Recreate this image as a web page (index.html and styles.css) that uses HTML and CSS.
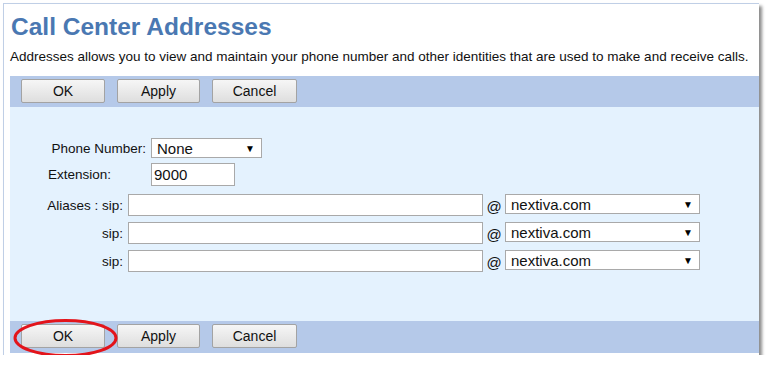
FILE: index.html
```html
<!DOCTYPE html>
<html>
<head>
<meta charset="utf-8">
<link rel="stylesheet" href="styles.css">
</head>
<body>
<div class="frame">
  <h1 class="title">Call Center Addresses</h1>
  <p class="desc">Addresses allows you to view and maintain your phone number and other identities that are used to make and receive calls.</p>
  <div class="bar">
    <button class="btn btn-ok">OK</button>
    <button class="btn btn-apply">Apply</button>
    <button class="btn btn-cancel">Cancel</button>
  </div>
  <div class="content">
    <div class="row row-phone">
      <span class="label label-phone">Phone Number:</span>
      <div class="select select-phone"><span class="sel-text">None</span><span class="arrow">▼</span></div>
    </div>
    <div class="row row-ext">
      <span class="label label-ext">Extension:</span>
      <div class="input input-ext">9000</div>
    </div>
    <div class="row row-alias">
      <span class="label label-alias">Aliases : sip:</span>
      <div class="input input-sip"></div>
      <span class="at">@</span>
      <div class="select select-domain"><span class="sel-text">nextiva.com</span><span class="arrow">▼</span></div>
    </div>
    <div class="row row-alias">
      <span class="label label-alias">sip:</span>
      <div class="input input-sip"></div>
      <span class="at">@</span>
      <div class="select select-domain"><span class="sel-text">nextiva.com</span><span class="arrow">▼</span></div>
    </div>
    <div class="row row-alias">
      <span class="label label-alias">sip:</span>
      <div class="input input-sip"></div>
      <span class="at">@</span>
      <div class="select select-domain"><span class="sel-text">nextiva.com</span><span class="arrow">▼</span></div>
    </div>
  </div>
  <div class="bar bar-bottom">
    <button class="btn btn-ok">OK</button>
    <button class="btn btn-apply">Apply</button>
    <button class="btn btn-cancel">Cancel</button>
    <svg class="highlight" width="105" height="40" viewBox="0 0 105 40"><ellipse cx="52.5" cy="20" rx="50.5" ry="17.5" fill="none" stroke="#e3141b" stroke-width="3"/></svg>
  </div>
</div>
</body>
</html>
```
FILE: styles.css
```css
html, body {
  margin: 0;
  padding: 0;
  background: #ffffff;
  font-family: "Liberation Sans", Arial, sans-serif;
  color: #111;
}
.frame {
  margin: 3px 0 0 3px;
  width: 749px;
  padding: 0 0 2px 6px;
  border-top: 1px solid #c0cfe6;
  border-left: 1px solid #c0cfe6;
  box-shadow: 3px 3px 3px rgba(0, 0, 0, 0.45);
  background: #fff;
}
.title {
  margin: 9px 0 0 1px;
  font-size: 24.5px;
  line-height: 28px;
  font-weight: bold;
  color: #4a78b2;
}
.desc {
  margin: 8px 0 0 0;
  font-size: 13.5px;
  line-height: 16px;
  white-space: nowrap;
  color: #111;
}
.bar {
  margin-top: 11px;
  height: 31px;
  background: #b5c9e9;
  display: flex;
  align-items: flex-start;
  gap: 12px;
  padding: 3px 0 0 11px;
  box-sizing: border-box;
  position: relative;
}
.bar-bottom {
  margin-top: 0;
  height: 32px;
}
.btn {
  height: 24px;
  width: 84px;
  padding: 0;
  border: 1px solid #a3a3a3;
  border-radius: 2px;
  background: linear-gradient(#f6f6f6, #dedede);
  font-family: "Liberation Sans", Arial, sans-serif;
  font-size: 14px;
  color: #111;
}
.btn-apply { width: 83px; }
.btn-cancel { width: 85px; }
.highlight {
  position: absolute;
  left: 3px;
  top: -3px;
}
.content {
  background: #e4f2fe;
  height: 214px;
  box-sizing: border-box;
  padding-top: 31px;
  font-size: 13.5px;
}
.row {
  display: flex;
  align-items: center;
}
.row-phone { height: 20px; }
.row-ext { height: 23px; margin-top: 5px; }
.row-alias { height: 22px; margin-top: 6px; }
.row-alias + .row-alias { margin-top: 6px; }
.row-ext + .row-alias { margin-top: 8px; }
.label {
  flex: none;
  white-space: nowrap;
}
.label-phone {
  width: 136px;
  text-align: right;
  margin-right: 5px;
}
.label-ext {
  width: 103px;
  padding-left: 38px;
}
.label-alias {
  width: 113px;
  text-align: right;
  margin-right: 5px;
}
.input {
  background: #fff;
  border: 1px solid #a9a9a9;
  box-sizing: border-box;
  font-size: 15px;
  padding-left: 2px;
  display: flex;
  align-items: center;
}
.input-ext {
  width: 84px;
  height: 23px;
}
.input-sip {
  width: 355px;
  height: 22px;
}
.at {
  font-size: 15px;
  width: 22px;
  text-align: center;
  margin-top: 2px;
}
.select {
  background: #fff;
  border: 1px solid #a9a9a9;
  box-sizing: border-box;
  display: flex;
  align-items: center;
  font-size: 15px;
  padding: 0 6px 0 5px;
}
.select-phone {
  width: 111px;
  height: 20px;
}
.select-domain {
  width: 195px;
  height: 20px;
  align-self: flex-start;
}
.sel-text { flex: 1; }
.arrow {
  font-size: 10px;
  color: #000;
}
```
